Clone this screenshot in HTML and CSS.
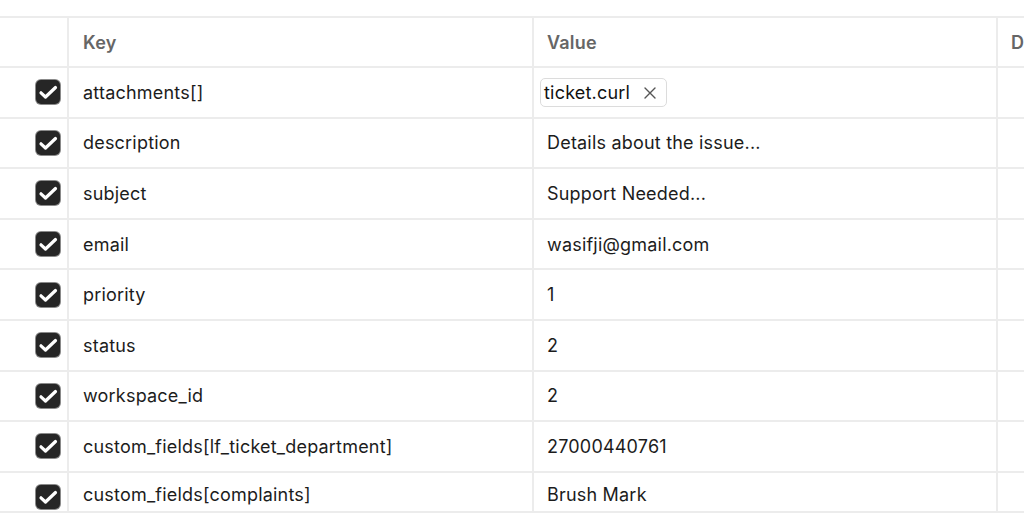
FILE: index.html
```html
<!DOCTYPE html>
<html>
<head>
<meta charset="utf-8">
<link rel="stylesheet" href="styles.css">
</head>
<body>
<div class="wrap">
  <div class="table">
    <div class="row head">
      <div class="cell chk"></div>
      <div class="cell key">Key</div>
      <div class="cell val">Value</div>
      <div class="cell desc">D</div>
    </div>
    <div class="row">
      <div class="cell chk"><span class="box"><svg viewBox="0 0 24 24" width="24" height="24"><path d="M5 12.8l4.5 4.2L19.5 7.5" fill="none" stroke="#fff" stroke-width="3.2" stroke-linecap="round" stroke-linejoin="round"/></svg></span></div>
      <div class="cell key">attachments[]</div>
      <div class="cell val"><span class="chip">ticket.curl<svg class="x" viewBox="0 0 12 12" width="12" height="12"><path d="M1 1L11 11M11 1L1 11" stroke="#555" stroke-width="1.4" stroke-linecap="round"/></svg></span></div>
      <div class="cell desc"></div>
    </div>
    <div class="row">
      <div class="cell chk"><span class="box"><svg viewBox="0 0 24 24" width="24" height="24"><path d="M5 12.8l4.5 4.2L19.5 7.5" fill="none" stroke="#fff" stroke-width="3.2" stroke-linecap="round" stroke-linejoin="round"/></svg></span></div>
      <div class="cell key">description</div>
      <div class="cell val">Details about the issue...</div>
      <div class="cell desc"></div>
    </div>
    <div class="row">
      <div class="cell chk"><span class="box"><svg viewBox="0 0 24 24" width="24" height="24"><path d="M5 12.8l4.5 4.2L19.5 7.5" fill="none" stroke="#fff" stroke-width="3.2" stroke-linecap="round" stroke-linejoin="round"/></svg></span></div>
      <div class="cell key">subject</div>
      <div class="cell val">Support Needed...</div>
      <div class="cell desc"></div>
    </div>
    <div class="row">
      <div class="cell chk"><span class="box"><svg viewBox="0 0 24 24" width="24" height="24"><path d="M5 12.8l4.5 4.2L19.5 7.5" fill="none" stroke="#fff" stroke-width="3.2" stroke-linecap="round" stroke-linejoin="round"/></svg></span></div>
      <div class="cell key">email</div>
      <div class="cell val">wasifji@gmail.com</div>
      <div class="cell desc"></div>
    </div>
    <div class="row">
      <div class="cell chk"><span class="box"><svg viewBox="0 0 24 24" width="24" height="24"><path d="M5 12.8l4.5 4.2L19.5 7.5" fill="none" stroke="#fff" stroke-width="3.2" stroke-linecap="round" stroke-linejoin="round"/></svg></span></div>
      <div class="cell key">priority</div>
      <div class="cell val">1</div>
      <div class="cell desc"></div>
    </div>
    <div class="row">
      <div class="cell chk"><span class="box"><svg viewBox="0 0 24 24" width="24" height="24"><path d="M5 12.8l4.5 4.2L19.5 7.5" fill="none" stroke="#fff" stroke-width="3.2" stroke-linecap="round" stroke-linejoin="round"/></svg></span></div>
      <div class="cell key">status</div>
      <div class="cell val">2</div>
      <div class="cell desc"></div>
    </div>
    <div class="row">
      <div class="cell chk"><span class="box"><svg viewBox="0 0 24 24" width="24" height="24"><path d="M5 12.8l4.5 4.2L19.5 7.5" fill="none" stroke="#fff" stroke-width="3.2" stroke-linecap="round" stroke-linejoin="round"/></svg></span></div>
      <div class="cell key">workspace_id</div>
      <div class="cell val">2</div>
      <div class="cell desc"></div>
    </div>
    <div class="row">
      <div class="cell chk"><span class="box"><svg viewBox="0 0 24 24" width="24" height="24"><path d="M5 12.8l4.5 4.2L19.5 7.5" fill="none" stroke="#fff" stroke-width="3.2" stroke-linecap="round" stroke-linejoin="round"/></svg></span></div>
      <div class="cell key">custom_fields[lf_ticket_department]</div>
      <div class="cell val">27000440761</div>
      <div class="cell desc"></div>
    </div>
    <div class="row last">
      <div class="cell chk"><span class="box"><svg viewBox="0 0 24 24" width="24" height="24"><path d="M5 12.8l4.5 4.2L19.5 7.5" fill="none" stroke="#fff" stroke-width="3.2" stroke-linecap="round" stroke-linejoin="round"/></svg></span></div>
      <div class="cell key">custom_fields[complaints]</div>
      <div class="cell val">Brush Mark</div>
      <div class="cell desc"></div>
    </div>
  </div>
</div>
</body>
</html>
```
FILE: styles.css
```css
html, body {
  margin: 0;
  padding: 0;
  background: #fff;
}
body {
  font-family: Inter, "Noto Sans", sans-serif;
  color: #1c1c1c;
  font-size: 18px;
  letter-spacing: 0.2px;
}
.wrap {
  padding-top: 16px;
  height: 513px;
  overflow: hidden;
  border-bottom: 2px solid #ececec;
  box-sizing: border-box;
}
.table {
  border-top: 2px solid #ececec;
}
.row {
  display: grid;
  grid-template-columns: 69px 465px 464px 40px;
  height: 50.6px;
  box-sizing: border-box;
  border-bottom: 2px solid #ececec;
}
.row.head {
  height: 50px;
}
.row.last {
  border-bottom: none;
  height: 60px;
}
.row.last .cell {
  align-items: flex-start;
  padding-top: 11px;
}
.row.last .cell.chk {
  padding-top: 12px;
}
.cell {
  display: flex;
  align-items: center;
  border-right: 2px solid #ececec;
  padding-left: 14px;
  white-space: nowrap;
  overflow: hidden;
}
.cell.chk {
  justify-content: flex-end;
  padding: 0 7px 0 0;
}
.cell.val {
  padding-left: 13px;
}
.cell.desc {
  padding-left: 13px;
  border-right: none;
}
.head .cell {
  font-weight: 600;
  color: #666;
}
.box {
  width: 24px;
  height: 24px;
  border-radius: 5px;
  background: #262626;
  box-shadow: 0 0 0 1px #8a8a8a;
  display: flex;
  align-items: center;
  justify-content: center;
}
.chip {
  display: inline-flex;
  align-items: center;
  height: 29px;
  box-sizing: border-box;
  border: 1px solid #dcdcdc;
  border-radius: 5px;
  padding: 0 10px 0 3px;
  margin-left: -7px;
  gap: 14px;
  color: #111;
}
.chip .x {
  margin-top: 1px;
}
```
